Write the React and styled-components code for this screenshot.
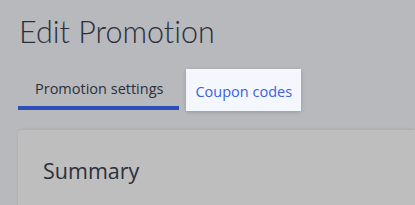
import React from "react";
import styled, { createGlobalStyle } from "styled-components";

const GlobalStyle = createGlobalStyle`
  html, body {
    margin: 0;
    padding: 0;
    background: #b8b9bc;
    overflow: hidden;
  }
`;

const Page = styled.div`
  width: 415px;
  height: 205px;
  box-sizing: border-box;
  padding: 12px 0 0 18px;
  background: #b8b9bc;
  overflow: hidden;
`;

const Title = styled.h1`
  margin: 0 0 0 1px;
  font-family: Lato, "Liberation Sans", sans-serif;
  font-weight: 300;
  font-size: 30.5px;
  line-height: 38px;
  font-variant-ligatures: none;
  color: #2b2f3c;
`;

const Tabs = styled.div`
  display: flex;
  align-items: flex-start;
  gap: 7px;
  margin-top: 19px;
`;

const Tab = styled.div`
  box-sizing: border-box;
  height: ${(p) => (p.$active ? "41px" : "42px")};
  display: flex;
  align-items: center;
  padding: ${(p) => (p.$active ? "2px 16px 0 17px" : "2px 9px 0")};
  font-family: "Open Sans", "Noto Sans", sans-serif;
  font-size: 14.5px;
  color: ${(p) => (p.$highlight ? "#3b5fe0" : "#2b2f3c")};
  background: ${(p) => (p.$highlight ? "#f5f7fe" : "transparent")};
  border-bottom: ${(p) => (p.$active ? "4px solid #2f4fb8" : "none")};
  box-shadow: ${(p) => (p.$highlight ? "0 1px 4px rgba(0,0,0,0.18)" : "none")};
`;

const Card = styled.div`
  margin-top: 19px;
  height: 120px;
  background: #bebebe;
  border-radius: 4px 0 0 0;
  box-shadow: 0 -1px 3px rgba(0, 0, 0, 0.08);
  padding: 26px 25px;
  box-sizing: border-box;
`;

const CardTitle = styled.h2`
  margin: 0;
  font-family: "Open Sans", "Noto Sans", sans-serif;
  font-weight: 400;
  font-size: 21.5px;
  color: #2b2f3c;
`;

export default function App() {
  return (
    <>
      <GlobalStyle />
      <Page>
        <Title>Edit Promotion</Title>
        <Tabs>
          <Tab $active>Promotion settings</Tab>
          <Tab $highlight>Coupon codes</Tab>
        </Tabs>
        <Card>
          <CardTitle>Summary</CardTitle>
        </Card>
      </Page>
    </>
  );
}
